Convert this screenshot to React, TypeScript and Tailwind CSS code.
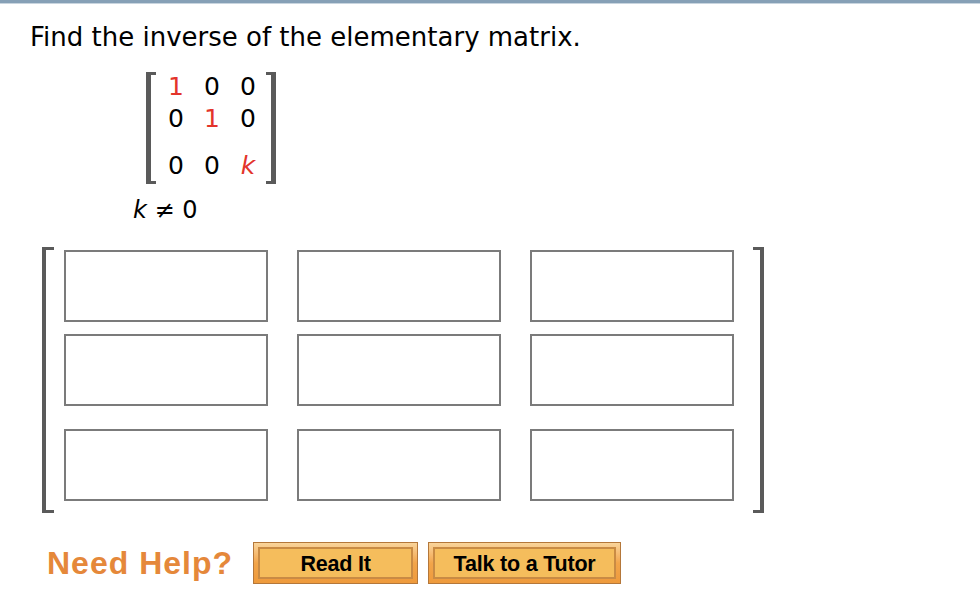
import React from "react";

const verdana = { fontFamily: '"DejaVu Sans", Verdana, sans-serif' };
const arial = { fontFamily: '"Liberation Sans", Arial, sans-serif' };

type Entry = { v: string; red?: boolean; italic?: boolean };

const rows: { cells: Entry[]; h: string }[] = [
  { cells: [{ v: "1", red: true }, { v: "0" }, { v: "0" }], h: "h-[27px]" },
  { cells: [{ v: "0" }, { v: "1", red: true }, { v: "0" }], h: "h-[32px]" },
  { cells: [{ v: "0" }, { v: "0" }, { v: "k", red: true, italic: true }], h: "h-[47px]" },
];

function SmallMatrix() {
  return (
    <div className="ml-[146px] mt-[20px] flex h-[112px]">
      <div className="w-[10px] border-y-[3px] border-l-[5px] border-[#5a5a5a]" />
      <div className="flex flex-col pl-[2px] text-[25px] leading-none text-black" style={verdana}>
        {rows.map((row, i) => (
          <div key={i} className={`flex ${row.h} items-end`}>
            {row.cells.map((c, j) => (
              <span
                key={j}
                className={`w-[36px] text-center ${c.red ? "text-[#e3342b]" : ""} ${c.italic ? "italic" : ""}`}
              >
                {c.v}
              </span>
            ))}
          </div>
        ))}
      </div>
      <div className="w-[10px] border-y-[3px] border-r-[5px] border-[#5a5a5a]" />
    </div>
  );
}

function Box() {
  return <div className="h-[72px] w-[204px] border-2 border-[#7b7b7b] bg-white" />;
}

function BoxRow({ className }: { className?: string }) {
  return (
    <div className={`flex gap-[29px] ${className ?? ""}`}>
      <Box />
      <Box />
      <Box />
    </div>
  );
}

function AnswerMatrix() {
  return (
    <div className="ml-[42px] mt-[24px] flex h-[266px] w-[722px]">
      <div className="w-[12px] border-y-[3px] border-l-[4px] border-[#5a5a5a]" />
      <div className="flex flex-1 flex-col pl-[10px] pt-[3px]">
        <BoxRow />
        <BoxRow className="mt-[12px]" />
        <BoxRow className="mt-[23px]" />
      </div>
      <div className="w-[11px] border-y-[3px] border-r-[4px] border-[#5a5a5a]" />
    </div>
  );
}

function HelpButton({ label, width }: { label: string; width: string }) {
  return (
    <button
      className={`${width} h-[42px] border border-[#b4773a] bg-gradient-to-b from-[#f9d49a] via-[#f2a54a] to-[#ee9a3c] p-[4px]`}
    >
      <div
        className="flex h-full w-full items-center justify-center border-2 border-[#c98b44] bg-[#f5bd5c] pt-[2px] text-[21.5px] font-bold tracking-[-0.2px] text-black"
        style={arial}
      >
        {label}
      </div>
    </button>
  );
}

export default function App() {
  return (
    <div className="h-[604px] w-[980px] overflow-hidden bg-white">
      <div className="h-[3px] bg-[#86a0b6]" />
      <div className="h-[1px] bg-[#c9d5df]" />
      <h1 className="ml-[30px] mt-[18px] text-[26px] leading-[30px] text-black" style={verdana}>
        Find the inverse of the elementary matrix.
      </h1>
      <SmallMatrix />
      <div className="ml-[133px] mt-[13px] text-[24px] leading-[26px] text-black" style={verdana}>
        <span className="italic">k</span> ≠ 0
      </div>
      <AnswerMatrix />
      <div className="ml-[47px] mt-[26px] flex items-center gap-[10px]">
        <span className="mr-[10px] text-[32px] font-bold tracking-[1px] text-[#e5883a]" style={arial}>
          Need Help?
        </span>
        <HelpButton label="Read It" width="w-[165px]" />
        <HelpButton label="Talk to a Tutor" width="w-[193px]" />
      </div>
    </div>
  );
}
